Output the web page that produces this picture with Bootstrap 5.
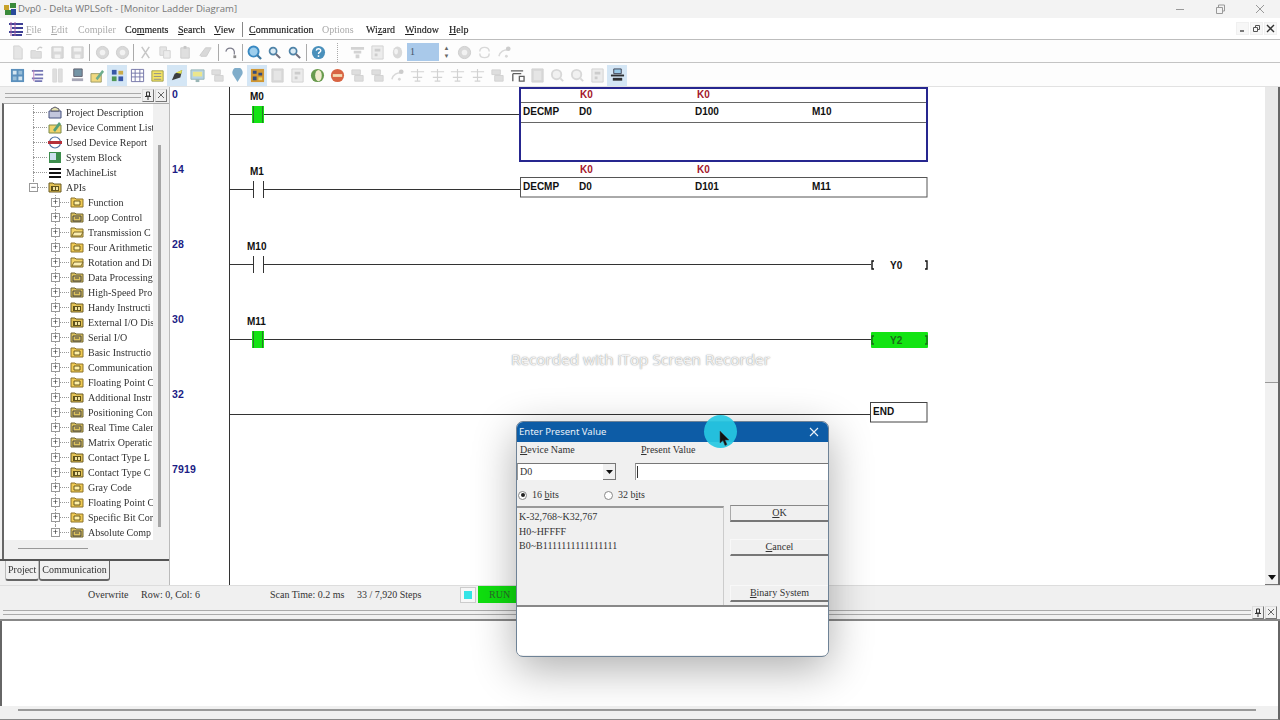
<!DOCTYPE html>
<html lang="en">
<head>
  <meta charset="UTF-8">
  <title>Dvp0 - Delta WPLSoft</title>
  <link href="https://cdn.jsdelivr.net/npm/bootstrap@5.3.3/dist/css/bootstrap.min.css" rel="stylesheet">
  <style>
    body { margin: 0; background: #fff; overflow: hidden; }
    #app { width: 1280px; height: 720px; position: relative; overflow: hidden; font-family: "Liberation Serif", serif; font-size: 10px; line-height: 1; color: #333; filter: blur(.3px); }

    .titlebar { height: 18px; background: #f3f3f3; color: #777; font-family: "Open Sans", sans-serif; font-size: 9.6px; padding-left: 3px; }
    .title-text { margin-left: 1px; }
    .win-btns svg { display: block; }
    .win-btn { width: 40px; display: flex; justify-content: center; }

    .menubar { height: 22px; background: #fff; border-bottom: 1px solid #bdbdbd; padding-left: 8px; }
    .menu-item { position: absolute; top: 25px; color: #222; -webkit-text-stroke: .15px #222; }
    .menu-off { color: #aaa; -webkit-text-stroke: 0; }
    .menu-rule { position: absolute; left: 242px; top: 22px; width: 1px; height: 15px; background: #888; }
    .mdi-btn { width: 13px; height: 13px; background: #f7f7f7; border: 1px solid #f0f0f0; margin-left: 1px; }

    .toolrow { height: 23px; background: #fdfdfd; border-bottom: 1px solid #c4c4c4; padding-top: 2px; }
    .row-one { padding-left: 7px; }
    .row-two { padding-left: 7px; height: 24px; border-bottom-color: #e2e2e2; }
    .tbtn { width: 20px; height: 21px; flex: none; display: flex; align-items: center; justify-content: center; }
    .tbtn svg { width: 15px; height: 15px; opacity: .85; }
    .tbtn-dim svg { opacity: .36; }
    .tbtn-on { background: #d4e6f5; }
    .tsep { flex: none; display: flex; justify-content: center; }
    .tsep::after { content: ""; width: 1px; height: 17px; background: #aaa; }
    .tdots { width: 39px; flex: none; display: flex; justify-content: center; }
    .tdots::after { content: ""; height: 19px; border-left: 1px dotted #aaa; }
    .spin-field { width: 32px; height: 18px; flex: none; background: #a9c9ea; color: #456; padding: 4px 0 0 3px; }
    .spin-arrows { width: 15px; flex: none; margin-right: 0; color: #666; font-size: 6px; line-height: 8px; text-align: center; }

    .mainarea { height: 498px; }
    .leftpane { width: 170px; flex: none; background: #f0f0f0; border-right: 1px solid #bbb; position: relative; }
    .pane-head { height: 16px; padding: 0 2px 0 5px; }
    .grip { flex-grow: 1; height: 5px; border-top: 1px solid #aaa; border-bottom: 1px solid #aaa; }
    .pane-btn { width: 12px; height: 13px; flex: none; margin-left: 1px; border: 1px solid #ddd; border-right-color: #777; border-bottom-color: #777; display: flex; align-items: center; justify-content: center; }
    .tree-box { height: 456px; margin-left: 2px; border-left: 2px solid #666; border-top: 1px solid #aaa; position: relative; }
    .tree-list { width: 149px; height: 436px; padding-top: 1px; background: #fff; overflow: hidden; }
    .tree-row { height: 15px; position: relative; white-space: nowrap; display: flex; align-items: center; }
    .lvl-one { padding-left: 44px; }
    .lvl-two { padding-left: 66px; }
    .tree-row svg.ficon { width: 14px; height: 13px; flex: none; margin-right: 4px; }
    .lvl-one::before { content: ""; position: absolute; left: 29px; top: 0; height: 15px; border-left: 1px dotted #999; }
    .lvl-one::after { content: ""; position: absolute; left: 29px; top: 7px; width: 14px; border-top: 1px dotted #999; }
    .lvl-two::before { content: ""; position: absolute; left: 51px; top: 0; height: 15px; border-left: 1px dotted #999; }
    .lvl-two::after { content: ""; position: absolute; left: 51px; top: 7px; width: 14px; border-top: 1px dotted #999; }
    .row-end::before { height: 8px; }
    .tree-box-sign { position: absolute; width: 9px; height: 9px; top: 3px; background: #fff; border: 1px solid #999; z-index: 1; color: #333; font: 9px/7px "Liberation Sans", sans-serif; text-align: center; }
    .lvl-one .tree-box-sign { left: 25px; }
    .lvl-two .tree-box-sign { left: 47px; }
    .tree-bar { position: absolute; left: 154px; top: 41px; width: 3px; height: 382px; background: #a6a6a6; }
    .tree-hbar { position: absolute; left: 14px; top: 444px; width: 70px; height: 1px; background: #999; }
    .tab-strip { height: 26px; border-top: 2px solid #555; padding-left: 5px; }
    .pane-tab { height: 20px; padding: 0 2px; border: 1px solid #bbb; border-top: 0; border-bottom: 2px solid #666; border-radius: 0 0 3px 3px; display: flex; align-items: center; }
    .tab-active { border-color: #666; border-bottom-width: 2px; }

    .ladder-wrap { flex-grow: 1; background: #fff; }
    .ladder-wrap svg { display: block; }
    .lad-line { stroke: #333; stroke-width: 1; }
    .lad-bold { font-family: "Liberation Sans", sans-serif; font-weight: 700; font-size: 10px; fill: #111; }
    .lad-red { fill: #a3152a; }
    .lad-num { font-family: "Liberation Sans", sans-serif; font-weight: 700; font-size: 10.5px; letter-spacing: .2px; fill: #1c1c85; }
    .v-scroll { width: 15px; flex: none; background: #f1f1f1; border-right: 2px solid #666; position: relative; }
    .v-thumb { height: 296px; background: #e9e9e9; border-bottom: 1px solid #999; }
    .v-down { position: absolute; left: 0; right: 0; bottom: 0; height: 14px; background: #f1f1f1; border-bottom: 1px solid #777; display: flex; align-items: center; justify-content: center; }

    .statusbar { height: 20px; background: #f0f0f0; border-top: 1px solid #ddd; padding-bottom: 2px; }
    .stat-cell { flex: none; }
    .stat-led { width: 16px; height: 16px; flex: none; background: #f7f7f7; border: 1px solid #ccc; display: flex; align-items: center; justify-content: center; margin-right: 2px; }
    .stat-led span { width: 8px; height: 8px; background: #35e4e6; display: block; }
    .stat-run { width: 60px; height: 17px; background: #0fe00f; color: #2a6a2a; padding-left: 11px; display: flex; align-items: center; flex: none; }

    .outhead { height: 16px; background: #f0f0f0; padding: 0 3px 0 3px; border-bottom: 2px solid #888; }
    .outbody { height: 85px; background: #fff; border-left: 2px solid #666; border-right: 2px solid #666; }
    .outfoot { height: 14px; background: #f0f0f0; border-bottom: 1px solid #888; padding-left: 18px; padding-top: 3px; border-right: 2px solid #666; }
    .outfoot-bar { width: 1238px; height: 2px; background: #999; }

    .watermark { position: absolute; left: 511px; top: 352px; font-family: "Open Sans", sans-serif; font-size: 15.3px; color: #f4f4f4; text-shadow: 0 0 1px #999, 0 0 2px #bbb; white-space: nowrap; }

    .present-dlg { position: absolute; left: 516px; top: 421px; width: 313px; height: 236px; background: #f0f0f0; border: 1px solid #6e8296; border-radius: 7px; overflow: hidden; box-shadow: 0 12px 44px rgba(0,0,0,.32); }
    .dlg-head { height: 20px; background: #0d5ca6; color: #e9f1f8; font-family: "Noto Sans", sans-serif; font-size: 9.5px; padding: 0 9px 0 2px; }
    .dlg-labels { height: 21px; padding: 3px 0 0 3px; }
    .label-dev { width: 121px; }
    .dlg-fields { height: 17px; }
    .combo-field { width: 99px; background: #fff; border-top: 1px solid #777; border-left: 1px solid #999; padding-left: 2px; position: relative; display: flex; align-items: center; }
    .combo-arrow { position: absolute; right: 0; top: 0; width: 13px; height: 16px; background: #f0f0f0; border-right: 1px solid #777; border-bottom: 1px solid #777; display: flex; align-items: center; justify-content: center; }
    .value-field { margin-left: 19px; flex-grow: 1; background: #fff; border-top: 1px solid #777; border-left: 1px solid #999; display: flex; align-items: center; padding-left: 1px; }
    .caret-bar { width: 1px; height: 12px; background: #333; }
    .dlg-radios { height: 26px; padding: 4px 0 0 1px; }
    .radio-dot { width: 9px; height: 9px; flex: none; border-radius: 50%; border: 1px solid #888; background: #fff; margin-right: 5px; position: relative; }
    .radio-on::after { content: ""; position: absolute; left: 1.5px; top: 1.5px; width: 4px; height: 4px; border-radius: 50%; background: #222; }
    .radio-gap { margin-left: 45px; }
    .dlg-bottom { height: 99px; }
    .range-box { width: 207px; flex: none; border-top: 2px solid #999; border-right: 1px solid #ccc; padding: 2px 0 0 2px; line-height: 14.5px; }
    .btn-stack { flex-grow: 1; padding: 0 0 3px 6px; margin-top: -1px; }
    .dlg-btn { width: 99px; height: 17px; padding: 0; border-radius: 0; background: #f0f0f0; font-size: 10px; line-height: 1; color: #333; border: 1px solid; border-color: #f8f8f8 #777 #777 #f8f8f8; border-bottom-width: 2px; }
    .btn-ok { border-color: #888 #777 #777 #aaa; }
    .dlg-foot { height: 50px; background: #fff; border-top: 2px solid #888; }

    .cursor-ring { position: absolute; left: 704px; top: 415px; width: 33px; height: 33px; border-radius: 50%; background: rgba(38,200,226,.92); }
    .cursor-arrow { position: absolute; left: 719px; top: 430px; }
  </style>
</head>
<body>
<svg width="0" height="0" class="position-absolute">
  <symbol id="i-page" viewBox="0 0 16 16"><path d="M4 1h6l3 3v11H4z" fill="#bbb" stroke="#888"/></symbol>
  <symbol id="i-open" viewBox="0 0 16 16"><path d="M1 14V6h5l1 1h5v7z" fill="#aaa" stroke="#888"/><path d="M8 5c1-3 3-3 5-2" fill="none" stroke="#777" stroke-width="1.4"/></symbol>
  <symbol id="i-save" viewBox="0 0 16 16"><path d="M2 2h12v12H2z" fill="#999" stroke="#777"/><path d="M4 3h8v4H4zM5 10h6v4H5z" fill="#ddd"/></symbol>
  <symbol id="i-disc" viewBox="0 0 16 16"><circle cx="8" cy="8" r="6.5" fill="#999" stroke="#777"/><circle cx="8" cy="8" r="3" fill="#ddd"/></symbol>
  <symbol id="i-cut" viewBox="0 0 16 16"><path d="M4 2l8 12M12 2L4 14" stroke="#666" stroke-width="1.6" fill="none"/></symbol>
  <symbol id="i-copy" viewBox="0 0 16 16"><path d="M2 2h7v9H2z" fill="#bbb" stroke="#888"/><path d="M6 6h7v8H6z" fill="#ccc" stroke="#888"/></symbol>
  <symbol id="i-paste" viewBox="0 0 16 16"><path d="M3 3h9v11H3z" fill="#aaa" stroke="#777"/><path d="M6 1h3v3H6z" fill="#666"/></symbol>
  <symbol id="i-erase" viewBox="0 0 16 16"><path d="M2 11l6-8h6l-5 9H3z" fill="#999" stroke="#777"/></symbol>
  <symbol id="i-undo" viewBox="0 0 16 16"><path d="M2 7c1-5 8-5 9 0v3" fill="none" stroke="#667" stroke-width="1.3"/><path d="M10 11h3v3h-3z" fill="#777"/></symbol>
  <symbol id="i-find" viewBox="0 0 16 16"><circle cx="7" cy="7" r="5.4" fill="#8cc6ea" stroke="#1775b8" stroke-width="2"/><path d="M11 11l4 4" stroke="#1d5f8e" stroke-width="2.4"/></symbol>
  <symbol id="i-zoom" viewBox="0 0 16 16"><circle cx="6.5" cy="6.5" r="3.8" fill="#d5e8f4" stroke="#2f6d98" stroke-width="1.8"/><path d="M9.5 9.5l4.500 4.500" stroke="#556" stroke-width="2.200"/></symbol>
  <symbol id="i-help" viewBox="0 0 16 16"><circle cx="8" cy="8" r="7" fill="#2b7db0"/><path d="M5.600 6c.4-2.600 4.800-2.600 4.800 0 0 1.700-2.400 1.600-2.400 3.500" fill="none" stroke="#fff" stroke-width="1.500"/><path d="M7.200 11h1.600v1.700H7.200z" fill="#fff"/></symbol>
  <symbol id="i-funnel" viewBox="0 0 16 16"><path d="M1 2h14v3H1zM4 6h8v3H4zM6 10h4v4H6z" fill="#888"/></symbol>
  <symbol id="i-block" viewBox="0 0 16 16"><path d="M2 1h12v14H2z" fill="#ccc" stroke="#888"/><path d="M5 4h6v3H5zM5 9h3v3H5z" fill="#777"/></symbol>
  <symbol id="i-bulb" viewBox="0 0 16 16"><ellipse cx="8" cy="8" rx="5" ry="6.500" fill="#999"/><ellipse cx="6.500" cy="7" rx="2" ry="3" fill="#ddd"/></symbol>
  <symbol id="i-refresh" viewBox="0 0 16 16"><path d="M3 7c0-6 10-6 10 0M13 9c0 6-10 6-10 0" fill="none" stroke="#999" stroke-width="1.500"/></symbol>
  <symbol id="i-wire" viewBox="0 0 16 16"><path d="M2 12c1-5 6-7 9-7" fill="none" stroke="#999" stroke-width="1.500"/><circle cx="12" cy="4" r="2.500" fill="#777"/><circle cx="10" cy="12" r="1.500" fill="#999"/></symbol>
  <symbol id="i-ld" viewBox="0 0 16 16"><path d="M1 1h14v14H1z" fill="#3f7eb2"/><path d="M3 3h4v4H3zM9 9h4v4H9z" fill="#cfe2f0"/><path d="M9 3h4v4H9zM3 9h4v4H3z" fill="#86b2d2"/></symbol>
  <symbol id="i-tree" viewBox="0 0 16 16"><path d="M2 2h12v2H2zM5 6h9v2H5zM2 10h12v2H2zM5 13h8v2H5z" fill="#5d5fa8"/><path d="M4 2v12" stroke="#b06ab0"/></symbol>
  <symbol id="i-net" viewBox="0 0 16 16"><path d="M3 1h4v14H3zM9 1h4v14H9z" fill="#aaa" stroke="#999"/></symbol>
  <symbol id="i-pc" viewBox="0 0 16 16"><path d="M4 1h9v8H4z" fill="#5d8296" stroke="#445"/><path d="M2 11h12v3H2z" fill="#99a"/></symbol>
  <symbol id="i-edit" viewBox="0 0 16 16"><path d="M1 6h11v9H1z" fill="#f0d36a" stroke="#8a8a4a"/><path d="M6 11l7-9 2 2-7 9z" fill="#55a07a"/></symbol>
  <symbol id="i-map" viewBox="0 0 16 16"><path d="M2 2h5v5H2z" fill="#1f3f9a"/><path d="M9 3h5v4H9z" fill="#c9a12a"/><path d="M2 9h5v5H2z" fill="#3a8a3a"/><path d="M9 9h5v5H9z" fill="#1f3f9a"/></symbol>
  <symbol id="i-grid" viewBox="0 0 16 16"><path d="M1.500 1.500h13v13h-13zM1.500 5.500h13M1.500 9.500h13M5.500 1.500v13M10.500 1.500v13" fill="#fff" stroke="#5d5f9a"/></symbol>
  <symbol id="i-note" viewBox="0 0 16 16"><path d="M2 3h12v11H2z" fill="#f4e24a" stroke="#8c8a2a"/><path d="M4 6h8M4 9h8M4 12h8" stroke="#777"/></symbol>
  <symbol id="i-probe" viewBox="0 0 16 16"><path d="M2 13l3-7 8-4-2 8z" fill="#222"/><path d="M6 5l7-3-1 4z" fill="#e7e332"/></symbol>
  <symbol id="i-msg" viewBox="0 0 16 16"><path d="M1 2h14v10H1z" fill="#a9cce2" stroke="#8aa"/><path d="M3 4h10v5H3z" fill="#e8e37a"/><path d="M6 12h4v3H6z" fill="#8aa"/></symbol>
  <symbol id="i-pin" viewBox="0 0 16 16"><path d="M8 15L3 7a5.500 5.500 0 1 1 10 0z" fill="#6ba0c2"/></symbol>
  <symbol id="i-mon" viewBox="0 0 16 16"><path d="M1 1h14v14H1z" fill="#d08a12"/><path d="M3 3h4v3H3zM9 5h4v3H9zM3 9h4v4H3z" fill="#16306a"/><path d="M9 10h4v3H9z" fill="#e8d24a"/></symbol>
  <symbol id="i-panel" viewBox="0 0 16 16"><path d="M2 1h12v14H2z" fill="#999" stroke="#888"/><path d="M4 3h8v10H4z" fill="#bbb"/></symbol>
  <symbol id="i-globe" viewBox="0 0 16 16"><circle cx="8" cy="8" r="7" fill="#4f8a30"/><ellipse cx="9" cy="8" rx="3.500" ry="6" fill="#efe9c8"/></symbol>
  <symbol id="i-stop" viewBox="0 0 16 16"><circle cx="8" cy="8" r="7" fill="#d24a22"/><path d="M3 6.500h10v3H3z" fill="#f3d6a6"/></symbol>
  <symbol id="i-rung" viewBox="0 0 16 16"><path d="M2 2h9v5H2zM5 8h9v6H5z" fill="#aaa" stroke="#888"/></symbol>
  <symbol id="i-rail" viewBox="0 0 16 16"><path d="M1 4h14M8 1v5M3 10h10M5 14h6M8 6v8" stroke="#888" stroke-width="1.200" fill="none"/></symbol>
  <symbol id="i-rungdk" viewBox="0 0 16 16"><path d="M1 3h13M3 6h9M3 6v8M10 9h5v5h-5z" stroke="#444" stroke-width="1.400" fill="none"/></symbol>
  <symbol id="i-lens" viewBox="0 0 16 16"><circle cx="7" cy="7" r="5" fill="#ddd" stroke="#999" stroke-width="2"/><path d="M11 11l3 3" stroke="#999" stroke-width="2"/></symbol>
  <symbol id="i-ins" viewBox="0 0 16 16"><path d="M4 1h8v5H4z" fill="#8fc6e6" stroke="#223"/><path d="M1 8h14" stroke="#111" stroke-width="2"/><path d="M3 12h10" stroke="#111" stroke-width="3"/></symbol>

  <symbol id="t-desc" viewBox="0 0 14 13"><path d="M1 5h12v7H1z" fill="#c2c6dc" stroke="#45507e"/><path d="M3 3l4-2 4 2v2H3z" fill="#e6e3b0" stroke="#556"/></symbol>
  <symbol id="t-comm" viewBox="0 0 14 13"><path d="M1 4h12v8H1z" fill="#f0d36a" stroke="#7a8a4a"/><path d="M5 9l6-8 2 2-6 8z" fill="#55a07a"/></symbol>
  <symbol id="t-rep" viewBox="0 0 14 13"><circle cx="7" cy="6.500" r="5.500" fill="#fff" stroke="#4a6ea0" stroke-width="1.200"/><path d="M0 5h14v3H0z" fill="#b5313a"/></symbol>
  <symbol id="t-sys" viewBox="0 0 14 13"><path d="M1 1h12v11H1z" fill="#3c8d4c"/><path d="M2 2h6v7H2z" fill="#cfe0ef"/></symbol>
  <symbol id="t-mach" viewBox="0 0 14 13"><path d="M1 2h12v2H1zM1 6h12v2H1zM1 10h12v2H1z" fill="#111"/></symbol>
  <symbol id="t-a" viewBox="0 0 14 13"><path d="M1 11V2h4l1 1h7v8z" fill="#f0cb55" stroke="#8a7028"/><path d="M4 5h6v4H4z" fill="#fff1a8" stroke="#6a5a22"/></symbol>
  <symbol id="t-b" viewBox="0 0 14 13"><path d="M1 11V2h4l1 1h7v8z" fill="#e3c255" stroke="#6a5a22"/><path d="M3 5h8v5H3z" fill="#60531c"/><path d="M5 6h2v3H5zM8 6h2v3H8z" fill="#f2e3a0"/></symbol>
  <symbol id="t-c" viewBox="0 0 14 13"><path d="M1 11V2h4l1 1h7v8z" fill="#f2d468" stroke="#7f6a28"/><path d="M2 10l2-4h9l-2 4z" fill="#fbeeb0" stroke="#7f6a28"/></symbol>
  <symbol id="t-d" viewBox="0 0 14 13"><path d="M1 11V2h4l1 1h7v8z" fill="#dcc25e" stroke="#6a6030"/><path d="M3 5h8v5H3z" fill="none" stroke="#444"/><path d="M5 7h4" stroke="#444"/></symbol>
</svg>

<div id="app" class="d-flex flex-column">
  <div class="titlebar d-flex align-items-center">
    <svg width="14" height="14" viewBox="0 0 14 14"><path d="M1 3h5v5H1z" fill="#c8a22a"/><path d="M7 1h6v5H7z" fill="#3a8a3a"/><path d="M2 8h6v5H2z" fill="#3a8a3a"/><path d="M8 7h5v6H8z" fill="#2a4a9a"/></svg>
    <span class="title-text flex-grow-1">Dvp0 - Delta WPLSoft - [Monitor Ladder Diagram]</span>
    <div class="win-btns d-flex align-items-center">
      <span class="win-btn"><svg width="10" height="10"><path d="M1 5.500h8" stroke="#999"/></svg></span>
      <span class="win-btn"><svg width="10" height="10"><path d="M1.500 3.500h6v6h-6zM3.500 3V1h6v6H8" fill="none" stroke="#999"/></svg></span>
      <span class="win-btn"><svg width="10" height="10"><path d="M1 1l8 8M9 1l-8 8" stroke="#999"/></svg></span>
    </div>
  </div>

  <div class="menubar d-flex align-items-center">
    <svg width="16" height="16" viewBox="0 0 16 16"><path d="M1 2h14v2H1zM4 6h11v2H4zM1 10h14v2H1zM4 13h10v2H4z" fill="#3d3f95"/><path d="M3 1v14M7 1v14" stroke="#a45ca4"/></svg>
    <span class="menu-item menu-off" style="left:26px"><u>F</u>ile</span>
    <span class="menu-item menu-off" style="left:51px"><u>E</u>dit</span>
    <span class="menu-item menu-off" style="left:78px">Compiler</span>
    <span class="menu-item" style="left:125px">Co<u>m</u>ments</span>
    <span class="menu-item" style="left:178px"><u>S</u>earch</span>
    <span class="menu-item" style="left:214px"><u>V</u>iew</span>
    <span class="menu-rule"></span>
    <span class="menu-item" style="left:249px"><u>C</u>ommunication</span>
    <span class="menu-item menu-off" style="left:322px">Options</span>
    <span class="menu-item" style="left:366px">Wi<u>z</u>ard</span>
    <span class="menu-item" style="left:405px"><u>W</u>indow</span>
    <span class="menu-item" style="left:449px"><u>H</u>elp</span>
    <div class="d-flex ms-auto align-items-center" style="margin-right:3px">
      <span class="mdi-btn d-flex align-items-center justify-content-center"><svg width="9" height="9"><path d="M2 7h4" stroke="#444" stroke-width="1.400"/></svg></span>
      <span class="mdi-btn d-flex align-items-center justify-content-center"><svg width="9" height="9"><path d="M1.500 3.500h4v4h-4zM3.500 3V1.500h4v4H6" fill="none" stroke="#555"/></svg></span>
      <span class="mdi-btn d-flex align-items-center justify-content-center"><svg width="9" height="9"><path d="M1 1l7 7M8 1l-7 7" stroke="#333" stroke-width="1.400"/></svg></span>
    </div>
  </div>

  <div class="toolrow row-one d-flex align-items-center">
    <span class="tbtn tbtn-dim"><svg><use href="#i-page"/></svg></span>
    <span class="tbtn tbtn-dim"><svg><use href="#i-open"/></svg></span>
    <span class="tbtn tbtn-dim"><svg><use href="#i-save"/></svg></span>
    <span class="tbtn tbtn-dim"><svg><use href="#i-save"/></svg></span>
    <span class="tsep" style="width:5px"></span>
    <span class="tbtn tbtn-dim"><svg><use href="#i-disc"/></svg></span>
    <span class="tbtn tbtn-dim"><svg><use href="#i-disc"/></svg></span>
    <span class="tsep" style="width:3px"></span>
    <span class="tbtn tbtn-dim"><svg><use href="#i-cut"/></svg></span>
    <span class="tbtn tbtn-dim"><svg><use href="#i-copy"/></svg></span>
    <span class="tbtn tbtn-dim"><svg><use href="#i-paste"/></svg></span>
    <span class="tbtn tbtn-dim"><svg><use href="#i-erase"/></svg></span>
    <span class="tsep" style="width:6px"></span>
    <span class="tbtn"><svg><use href="#i-undo"/></svg></span>
    <span class="tsep" style="width:3px"></span>
    <span class="tbtn"><svg><use href="#i-find"/></svg></span>
    <span class="tbtn"><svg><use href="#i-zoom"/></svg></span>
    <span class="tbtn"><svg><use href="#i-zoom"/></svg></span>
    <span class="tsep" style="width:4px"></span>
    <span class="tbtn"><svg><use href="#i-help"/></svg></span>
    <span class="tdots" style="width:19px"></span>
    <span class="tbtn tbtn-dim"><svg><use href="#i-funnel"/></svg></span>
    <span class="tbtn tbtn-dim"><svg><use href="#i-block"/></svg></span>
    <span class="tbtn tbtn-dim"><svg><use href="#i-bulb"/></svg></span>
    <span class="spin-field">1</span>
    <span class="spin-arrows">&#9650;<br>&#9660;</span>
    <span class="tbtn tbtn-dim"><svg><use href="#i-disc"/></svg></span>
    <span class="tbtn tbtn-dim"><svg><use href="#i-refresh"/></svg></span>
    <span class="tbtn tbtn-dim"><svg><use href="#i-wire"/></svg></span>
  </div>

  <div class="toolrow row-two d-flex align-items-center">
    <span class="tbtn"><svg><use href="#i-ld"/></svg></span>
    <span class="tbtn"><svg><use href="#i-tree"/></svg></span>
    <span class="tbtn tbtn-dim"><svg><use href="#i-net"/></svg></span>
    <span class="tbtn"><svg><use href="#i-pc"/></svg></span>
    <span class="tbtn"><svg><use href="#i-edit"/></svg></span>
    <span class="tbtn tbtn-on"><svg><use href="#i-map"/></svg></span>
    <span class="tbtn"><svg><use href="#i-grid"/></svg></span>
    <span class="tbtn"><svg><use href="#i-note"/></svg></span>
    <span class="tbtn tbtn-on"><svg><use href="#i-probe"/></svg></span>
    <span class="tbtn"><svg><use href="#i-msg"/></svg></span>
    <span class="tbtn tbtn-dim"><svg><use href="#i-rung"/></svg></span>
    <span class="tbtn"><svg><use href="#i-pin"/></svg></span>
    <span class="tbtn tbtn-on"><svg><use href="#i-mon"/></svg></span>
    <span class="tbtn tbtn-dim"><svg><use href="#i-panel"/></svg></span>
    <span class="tbtn tbtn-dim"><svg><use href="#i-block"/></svg></span>
    <span class="tbtn"><svg><use href="#i-globe"/></svg></span>
    <span class="tbtn"><svg><use href="#i-stop"/></svg></span>
    <span class="tbtn tbtn-dim"><svg><use href="#i-rung"/></svg></span>
    <span class="tbtn tbtn-dim"><svg><use href="#i-rung"/></svg></span>
    <span class="tbtn tbtn-dim"><svg><use href="#i-wire"/></svg></span>
    <span class="tbtn tbtn-dim"><svg><use href="#i-rail"/></svg></span>
    <span class="tbtn tbtn-dim"><svg><use href="#i-rail"/></svg></span>
    <span class="tbtn tbtn-dim"><svg><use href="#i-rail"/></svg></span>
    <span class="tbtn tbtn-dim"><svg><use href="#i-rail"/></svg></span>
    <span class="tbtn tbtn-dim"><svg><use href="#i-rung"/></svg></span>
    <span class="tbtn"><svg><use href="#i-rungdk"/></svg></span>
    <span class="tbtn tbtn-dim"><svg><use href="#i-panel"/></svg></span>
    <span class="tbtn tbtn-dim"><svg><use href="#i-lens"/></svg></span>
    <span class="tbtn tbtn-dim"><svg><use href="#i-lens"/></svg></span>
    <span class="tbtn tbtn-dim"><svg><use href="#i-block"/></svg></span>
    <span class="tbtn tbtn-on"><svg><use href="#i-ins"/></svg></span>
  </div>

  <div class="mainarea d-flex">
    <div class="leftpane d-flex flex-column">
      <div class="pane-head d-flex align-items-center">
        <span class="grip"></span>
        <span class="pane-btn"><svg width="8" height="9"><path d="M2.500 1h3v4h-3zM1 5.500h6M4 6v3" fill="none" stroke="#333"/></svg></span>
        <span class="pane-btn"><svg width="8" height="8"><path d="M1 1l6 6M7 1l-6 6" stroke="#666"/></svg></span>
      </div>
      <div class="tree-box">
        <div class="tree-list">
          <div class="tree-row lvl-one"><svg class="ficon"><use href="#t-desc"/></svg>Project Description</div>
          <div class="tree-row lvl-one"><svg class="ficon"><use href="#t-comm"/></svg>Device Comment List</div>
          <div class="tree-row lvl-one"><svg class="ficon"><use href="#t-rep"/></svg>Used Device Report</div>
          <div class="tree-row lvl-one"><svg class="ficon"><use href="#t-sys"/></svg>System Block</div>
          <div class="tree-row lvl-one"><svg class="ficon"><use href="#t-mach"/></svg>MachineList</div>
          <div class="tree-row lvl-one row-end"><span class="tree-box-sign">&minus;</span><svg class="ficon"><use href="#t-b"/></svg>APIs</div>
          <div class="tree-row lvl-two"><span class="tree-box-sign">+</span><svg class="ficon"><use href="#t-a"/></svg>Function</div>
          <div class="tree-row lvl-two"><span class="tree-box-sign">+</span><svg class="ficon"><use href="#t-d"/></svg>Loop Control</div>
          <div class="tree-row lvl-two"><span class="tree-box-sign">+</span><svg class="ficon"><use href="#t-c"/></svg>Transmission C</div>
          <div class="tree-row lvl-two"><span class="tree-box-sign">+</span><svg class="ficon"><use href="#t-a"/></svg>Four Arithmetic</div>
          <div class="tree-row lvl-two"><span class="tree-box-sign">+</span><svg class="ficon"><use href="#t-c"/></svg>Rotation and Di</div>
          <div class="tree-row lvl-two"><span class="tree-box-sign">+</span><svg class="ficon"><use href="#t-d"/></svg>Data Processing</div>
          <div class="tree-row lvl-two"><span class="tree-box-sign">+</span><svg class="ficon"><use href="#t-d"/></svg>High-Speed Pro</div>
          <div class="tree-row lvl-two"><span class="tree-box-sign">+</span><svg class="ficon"><use href="#t-b"/></svg>Handy Instructi</div>
          <div class="tree-row lvl-two"><span class="tree-box-sign">+</span><svg class="ficon"><use href="#t-b"/></svg>External I/O Dis</div>
          <div class="tree-row lvl-two"><span class="tree-box-sign">+</span><svg class="ficon"><use href="#t-d"/></svg>Serial I/O</div>
          <div class="tree-row lvl-two"><span class="tree-box-sign">+</span><svg class="ficon"><use href="#t-a"/></svg>Basic Instructio</div>
          <div class="tree-row lvl-two"><span class="tree-box-sign">+</span><svg class="ficon"><use href="#t-a"/></svg>Communication</div>
          <div class="tree-row lvl-two"><span class="tree-box-sign">+</span><svg class="ficon"><use href="#t-a"/></svg>Floating Point C</div>
          <div class="tree-row lvl-two"><span class="tree-box-sign">+</span><svg class="ficon"><use href="#t-b"/></svg>Additional Instr</div>
          <div class="tree-row lvl-two"><span class="tree-box-sign">+</span><svg class="ficon"><use href="#t-d"/></svg>Positioning Con</div>
          <div class="tree-row lvl-two"><span class="tree-box-sign">+</span><svg class="ficon"><use href="#t-d"/></svg>Real Time Caler</div>
          <div class="tree-row lvl-two"><span class="tree-box-sign">+</span><svg class="ficon"><use href="#t-d"/></svg>Matrix Operatic</div>
          <div class="tree-row lvl-two"><span class="tree-box-sign">+</span><svg class="ficon"><use href="#t-b"/></svg>Contact Type L</div>
          <div class="tree-row lvl-two"><span class="tree-box-sign">+</span><svg class="ficon"><use href="#t-b"/></svg>Contact Type C</div>
          <div class="tree-row lvl-two"><span class="tree-box-sign">+</span><svg class="ficon"><use href="#t-a"/></svg>Gray Code</div>
          <div class="tree-row lvl-two"><span class="tree-box-sign">+</span><svg class="ficon"><use href="#t-a"/></svg>Floating Point C</div>
          <div class="tree-row lvl-two"><span class="tree-box-sign">+</span><svg class="ficon"><use href="#t-a"/></svg>Specific Bit Cor</div>
          <div class="tree-row lvl-two row-end"><span class="tree-box-sign">+</span><svg class="ficon"><use href="#t-d"/></svg>Absolute Comp</div>
        </div>
        <span class="tree-bar"></span>
        <span class="tree-hbar"></span>
      </div>
      <div class="tab-strip d-flex">
        <span class="pane-tab">Project</span>
        <span class="pane-tab tab-active">Communication</span>
      </div>
    </div>

    <div class="ladder-wrap d-flex">
      <svg width="1095" height="498" viewBox="170 87 1095 498">
        <path class="lad-line" d="M229.500 87v498M229 114.500h291M229 189.500h291M229 264.500h642M229 339.500h642M229 414.500h641"/>
        <text class="lad-num" x="172" y="98">0</text>
        <text class="lad-num" x="172" y="173">14</text>
        <text class="lad-num" x="172" y="248">28</text>
        <text class="lad-num" x="172" y="323">30</text>
        <text class="lad-num" x="172" y="398">32</text>
        <text class="lad-num" x="172" y="473">7919</text>

        <text class="lad-bold" x="250" y="100">M0</text>
        <rect x="252" y="106" width="12" height="17" fill="#13e413"/>
        <path d="M253.500 106v17M262.500 106v17" stroke="#2a7a2a"/>
        <text class="lad-bold" x="250" y="175">M1</text>
        <path class="lad-line" d="M253.500 181v17M263.500 181v17"/>
        <rect x="254" y="186" width="9" height="7" fill="#fff"/>
        <text class="lad-bold" x="247" y="250">M10</text>
        <path class="lad-line" d="M253.500 256v17M263.500 256v17"/>
        <rect x="254" y="261" width="9" height="7" fill="#fff"/>
        <text class="lad-bold" x="247" y="325">M11</text>
        <rect x="252" y="331" width="12" height="17" fill="#13e413"/>
        <path d="M253.500 331v17M262.500 331v17" stroke="#2a7a2a"/>

        <path d="M520 102.500h407M520 122.500h407" stroke="#666" fill="none"/>
        <rect x="520" y="88" width="407" height="73" fill="none" stroke="#26268f" stroke-width="2"/>
        <text class="lad-bold lad-red" x="580" y="98">K0</text>
        <text class="lad-bold lad-red" x="697" y="98">K0</text>
        <text class="lad-bold" x="523" y="115">DECMP</text>
        <text class="lad-bold" x="579" y="115">D0</text>
        <text class="lad-bold" x="695" y="115">D100</text>
        <text class="lad-bold" x="812" y="115">M10</text>

        <rect x="520.500" y="177.500" width="406.500" height="19.500" fill="none" stroke="#555"/>
        <text class="lad-bold lad-red" x="580" y="173">K0</text>
        <text class="lad-bold lad-red" x="697" y="173">K0</text>
        <text class="lad-bold" x="523" y="190">DECMP</text>
        <text class="lad-bold" x="579" y="190">D0</text>
        <text class="lad-bold" x="695" y="190">D101</text>
        <text class="lad-bold" x="812" y="190">M11</text>

        <path d="M874 261h-2v8h2M925 261h2v8h-2" fill="none" stroke="#111" stroke-width="1.400"/>
        <text class="lad-bold" x="890" y="269">Y0</text>

        <rect x="871" y="332" width="57" height="16" rx="1" fill="#13e413"/>
        <path d="M874 336h-2v8h2M925 336h2v8h-2" fill="none" stroke="#1a6a1a" stroke-width="1.400"/>
        <text class="lad-bold" x="890" y="344" style="fill:#1a6a1a">Y2</text>

        <rect x="870.500" y="402.500" width="56.500" height="19.500" fill="#fff" stroke="#444"/>
        <text class="lad-bold" x="873" y="415">END</text>
      </svg>
      <div class="v-scroll">
        <div class="v-thumb"></div>
        <div class="v-down"><svg width="8" height="5"><path d="M0 0h8L4 5z" fill="#111"/></svg></div>
      </div>
    </div>
  </div>

  <div class="statusbar d-flex align-items-center">
    <span class="stat-cell" style="width:88px"></span>
    <span class="stat-cell" style="width:53px">Overwrite</span>
    <span class="stat-cell" style="width:129px">Row: 0, Col: 6</span>
    <span class="stat-cell" style="width:87px">Scan Time: 0.2 ms</span>
    <span class="stat-cell" style="width:103px">33 / 7,920 Steps</span>
    <span class="stat-led"><span></span></span>
    <span class="stat-run">RUN</span>
  </div>

  <div class="outhead d-flex align-items-center">
    <span class="grip"></span>
    <span class="pane-btn"><svg width="8" height="9"><path d="M2.500 1h3v4h-3zM1 5.500h6M4 6v3" fill="none" stroke="#333"/></svg></span>
    <span class="pane-btn"><svg width="8" height="8"><path d="M1 1l6 6M7 1l-6 6" stroke="#666"/></svg></span>
  </div>
  <div class="outbody"></div>
  <div class="outfoot"><div class="outfoot-bar"></div></div>

  <div class="watermark">Recorded with iTop Screen Recorder</div>

  <div class="present-dlg d-flex flex-column">
    <div class="dlg-head d-flex align-items-center justify-content-between">
      <span>Enter Present Value</span>
      <svg width="10" height="10"><path d="M1 1l8 8M9 1l-8 8" stroke="#e9f1f8" stroke-width="1.100"/></svg>
    </div>
    <div class="dlg-labels d-flex">
      <span class="label-dev"><u>D</u>evice Name</span>
      <span><u>P</u>resent Value</span>
    </div>
    <div class="dlg-fields d-flex">
      <div class="combo-field">D0<span class="combo-arrow"><svg width="7" height="4"><path d="M0 0h7L3.500 4z" fill="#111"/></svg></span></div>
      <div class="value-field"><span class="caret-bar"></span></div>
    </div>
    <div class="dlg-radios d-flex align-items-center">
      <span class="radio-dot radio-on"></span><span>16 <u>b</u>its</span>
      <span class="radio-dot radio-gap"></span><span>32 b<u>i</u>ts</span>
    </div>
    <div class="dlg-bottom d-flex">
      <div class="range-box">K-32,768~K32,767<br>H0~HFFFF<br>B0~B1111111111111111</div>
      <div class="btn-stack d-flex flex-column justify-content-between">
        <button type="button" class="btn dlg-btn btn-ok"><u>O</u>K</button>
        <button type="button" class="btn dlg-btn" style="margin-bottom:13px"><u>C</u>ancel</button>
        <button type="button" class="btn dlg-btn"><u>B</u>inary System</button>
      </div>
    </div>
    <div class="dlg-foot"></div>
  </div>

  <div class="cursor-ring"></div>
  <svg class="cursor-arrow" width="12" height="17" viewBox="0 0 12 17"><path d="M1 1v12l3-2.500 2 5 2-1-2-4.500h4z" fill="#111" stroke="#444" stroke-width=".5"/></svg>
</div>

<script src="https://cdn.jsdelivr.net/npm/bootstrap@5.3.3/dist/js/bootstrap.bundle.min.js"></script>
</body>
</html>
